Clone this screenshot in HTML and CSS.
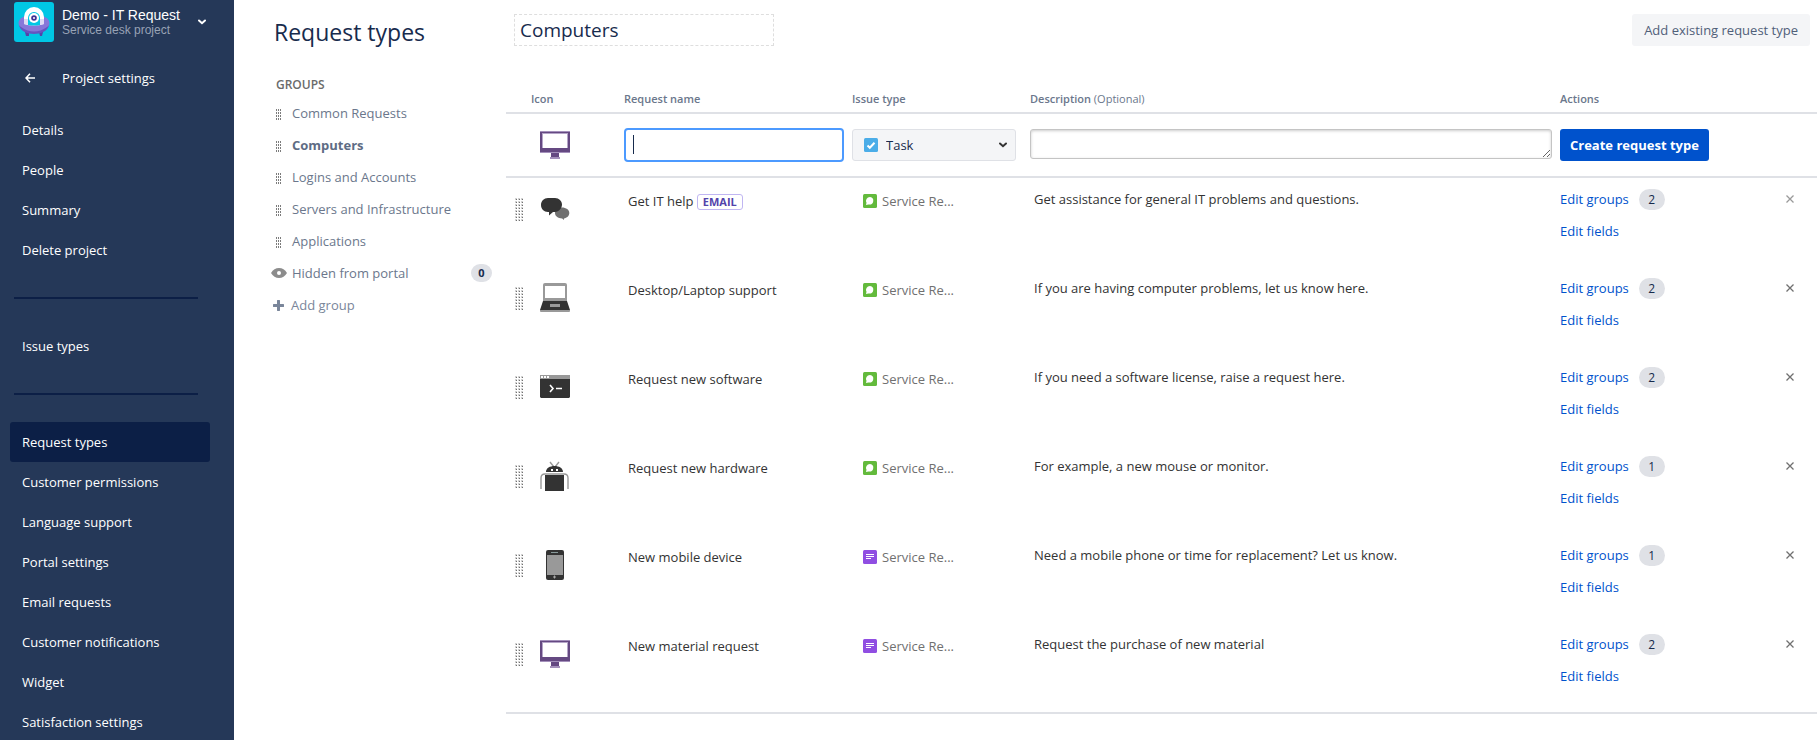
FILE: index.html
```
<!DOCTYPE html>
<html lang="en">
<head>
<meta charset="utf-8">
<title>Request types</title>
<link rel="stylesheet" href="styles.css">
</head>
<body>
<svg class="sprite" aria-hidden="true">
  <defs>
    <pattern id="dots" width="3" height="3" patternUnits="userSpaceOnUse"><rect width="2" height="2" fill="#d2d2d2"/><rect x="1" y="1" width="1" height="1" fill="#707070"/></pattern>
    <symbol id="grip" viewBox="0 0 9 24"><rect width="9" height="24" fill="url(#dots)"/></symbol>
    <symbol id="grip-s" viewBox="0 0 6 12"><path d="M0 0h1v2H0zM2 0h1v2H2zM4 0h1v2H4zM0 3h1v2H0zM2 3h1v2H2zM4 3h1v2H4zM0 6h1v2H0zM2 6h1v2H2zM4 6h1v2H4zM0 9h1v2H0zM2 9h1v2H2zM4 9h1v2H4z" fill="#7c7c7c"/></symbol>
    <symbol id="monitor" viewBox="0 0 30 30"><path d="M0 1h30v22H0z" fill="#a490bb"/><path d="M0 2h30v20H0z" fill="#654982"/><path d="M2 3h26v15H2z" fill="#b5a5c8"/><path d="M3 4h24v14H3z" fill="#fff"/><path d="M11 23h8v4h-8z" fill="#654982"/><path d="M10 27h10v2H10z" fill="#a490bb"/></symbol>
    <symbol id="chat" viewBox="0 0 30 30"><path d="M22 13.500c4 0 7.300 2.300 7.300 5.500 0 3-2.500 5-5.300 5.400L23.800 26l-1.600-1.600c-4.300 0-7.200-2.300-7.200-5.400s3-5.500 7-5.500z" fill="#707070"/><path d="M8 4h7c4 0 7 3 7 6.500S19 18 15 18h-2l-4 3.500V18H8c-4 0-7-3-7-7s3-7 7-7z" fill="#333"/></symbol>
    <symbol id="laptop" viewBox="0 0 30 30"><path d="M5 0h20q2 0 2 2v16H3V2q0-2 2-2z" fill="#999"/><path d="M5 3h20v12H5z" fill="#fff"/><path d="M3 18h24l3 9H0z" fill="#333"/><path d="M10 21h10v3H10z" fill="#999"/><path d="M0 27h30v1q0 1-1 1H1q-1 0-1-1z" fill="#999"/></symbol>
    <symbol id="terminal" viewBox="0 0 30 30"><path d="M1 3h28l1 1v21l-1 1H1l-1-1V4z" fill="#333"/><path d="M1 3h28l1 1v3H0V4z" fill="#999"/><path d="M1 4h2v2H1zM4 4h2v2H4zM7 4h2v2H7z" fill="#fff"/><path d="M10 13l3 3.500-3 3.500M16 16.500h6" fill="none" stroke="#fff" stroke-width="1.600"/></symbol>
    <symbol id="android" viewBox="0 0 30 30"><path d="M10 1l4 5M19 1l-4 5M1 28V17q0-4 4-4h19q4 0 4 4v11" fill="none" stroke="#999" stroke-width="1.400"/><path d="M6 11c0-4 4-6 8.500-6S23 7 23 11zM5 14h19v16H5z" fill="#333"/><path d="M11 8h2v2h-2zM16 8h2v2h-2z" fill="#fff"/></symbol>
    <symbol id="mobile" viewBox="0 0 30 30"><rect x="6" width="18" height="30" rx="2" fill="#333"/><path d="M7 5h16v20H7z" fill="#999"/><path d="M11 2h7v1h-7z" fill="#899"/><path d="M13 27h3M14.500 25.500v3" stroke="#aaa"/></symbol>
    <symbol id="request" viewBox="0 0 14 14"><rect width="14" height="14" rx="1.500" fill="#63ba3c"/><path d="M7 3a4 3.800 0 1 1-1.500 7.500L3 11l.5-2.300A4 3.800 0 0 1 7 3z" fill="#fff"/></symbol>
    <symbol id="purple" viewBox="0 0 14 14"><rect width="14" height="14" rx="1.500" fill="#904ee2"/><path d="M3 4.500h8M3 6.500h8M3 8.500h5" stroke="#fff"/></symbol>
    <symbol id="cross" viewBox="0 0 8 8"><path d="M.5.500l7 7M7.500.500l-7 7" stroke="#707070" stroke-width="1.300"/></symbol>
    <symbol id="chevron" viewBox="0 0 8 6"><path d="M1 1.500l3 2.700 3-2.700" fill="none" stroke="currentColor" stroke-width="2" stroke-linecap="round"/></symbol>
  </defs>
</svg>
<div class="app">
  <nav class="sidebar">
    <button class="project" type="button">
      <svg class="avatar" viewBox="0 0 40 40" aria-hidden="true"><rect width="40" height="40" rx="3" fill="#00c7e5"/><path d="M11 30h4v4h-3zM25 30h4l-1 4h-2z" fill="#5243aa"/><ellipse cx="20" cy="21" rx="15.500" ry="8.500" fill="#8777d9"/><path d="M5 23q15 9 30 0c-2 12-28 12-30 0z" fill="#6554c0"/><path d="M5 21q15 12 30 0c0 2 0 3-2 4q-13 9-26 0c-2-1-2-2-2-4z" fill="#8777d9"/><path d="M10 22v-7a10 10 0 0 1 20 0v7q-10 3-20 0z" fill="#fff"/><path d="M10 17h4v6l-4-1zM26 17h4v5l-4 1z" fill="#dfdaf5"/><path d="M14 23v-7a6 6 0 0 1 12 0v7q-6 1-12 0z" fill="#00c7e5"/><circle cx="20" cy="16" r="5" fill="#fff"/><circle cx="20" cy="16" r="2.800" fill="#403294"/><circle cx="20" cy="16" r="1" fill="#fff"/></svg>
      <span class="project-text"><span class="project-name">Demo - IT Request</span><span class="project-kind">Service desk project</span></span>
      <svg class="chev" aria-hidden="true"><use href="#chevron"/></svg>
    </button>
    <a class="back" href="#"><svg width="10" height="10" viewBox="0 0 10 10" aria-hidden="true"><path d="M5 .800L1 5l4 4.200M1 5h9" fill="none" stroke="#fff" stroke-width="1.500"/></svg><span>Project settings</span></a>
    <a class="item" href="#">Details</a>
    <a class="item" href="#">People</a>
    <a class="item" href="#">Summary</a>
    <a class="item" href="#">Delete project</a>
    <hr class="rule">
    <a class="item" href="#">Issue types</a>
    <hr class="rule">
    <a class="item active" href="#">Request types</a>
    <a class="item" href="#">Customer permissions</a>
    <a class="item" href="#">Language support</a>
    <a class="item" href="#">Portal settings</a>
    <a class="item" href="#">Email requests</a>
    <a class="item" href="#">Customer notifications</a>
    <a class="item" href="#">Widget</a>
    <a class="item" href="#">Satisfaction settings</a>
  </nav>
  <aside class="groups">
    <h1>Request types</h1>
    <h2>GROUPS</h2>
    <a class="group" href="#"><svg class="gs" aria-hidden="true"><use href="#grip-s"/></svg>Common Requests</a>
    <a class="group current" href="#"><svg class="gs" aria-hidden="true"><use href="#grip-s"/></svg>Computers</a>
    <a class="group" href="#"><svg class="gs" aria-hidden="true"><use href="#grip-s"/></svg>Logins and Accounts</a>
    <a class="group" href="#"><svg class="gs" aria-hidden="true"><use href="#grip-s"/></svg>Servers and Infrastructure</a>
    <a class="group" href="#"><svg class="gs" aria-hidden="true"><use href="#grip-s"/></svg>Applications</a>
    <a class="group wide" href="#"><svg width="16" height="10" viewBox="0 0 16 10" aria-hidden="true"><path d="M0 5q3-5 8-5t8 5q-3 5-8 5T0 5z" fill="#8c8c8c"/><circle cx="8" cy="5" r="2" fill="#fff"/></svg>Hidden from portal<span class="count small">0</span></a>
    <button class="group add" type="button"><svg width="11" height="11" viewBox="0 0 11 11" aria-hidden="true"><path d="M5.500 1v9M1 5.500h9" stroke="#7a869a" stroke-width="3" stroke-linecap="round"/></svg>Add group</button>
  </aside>
  <main class="content">
    <header class="top">
      <input class="title" type="text" value="Computers" aria-label="Group name">
      <button class="existing" type="button">Add existing request type</button>
    </header>
    <table>
      <colgroup><col class="c-grip"><col class="c-icon"><col class="c-name"><col class="c-type"><col><col class="c-act"><col class="c-del"></colgroup>
      <thead>
        <tr><th></th><th>Icon</th><th>Request name</th><th>Issue type</th><th>Description <span>(Optional)</span></th><th>Actions</th><th></th></tr>
      </thead>
      <tbody>
        <tr class="create"><td></td><td><svg class="icon" aria-hidden="true"><use href="#monitor"/></svg></td>
          <td><input class="name-field" type="text" aria-label="Request name" autofocus></td>
          <td><div class="select"><svg class="task" viewBox="0 0 14 14" aria-hidden="true"><rect width="14" height="14" rx="1.500" fill="#4bade8"/><path d="M3.500 7.500l2.300 2.300 4.700-5" fill="none" stroke="#fff" stroke-width="2"/></svg><select aria-label="Issue type"><option>Task</option><option>Service Request</option></select><svg class="chev" aria-hidden="true"><use href="#chevron"/></svg></div></td>
          <td><textarea rows="1" aria-label="Description"></textarea></td>
          <td colspan="2"><button class="primary" type="button">Create request type</button></td></tr>
        <tr><td><svg class="grip" aria-hidden="true"><use href="#grip"/></svg></td><td><svg class="icon" aria-hidden="true"><use href="#chat"/></svg></td><td class="name">Get IT help <span class="tag">EMAIL</span></td><td class="type"><svg aria-hidden="true"><use href="#request"/></svg>Service Re...</td><td class="desc">Get assistance for general IT problems and questions.</td><td class="act"><a href="#">Edit groups</a><span class="count">2</span><br><a href="#">Edit fields</a></td><td class="del"><button class="remove faded" type="button" aria-label="Remove"><svg aria-hidden="true"><use href="#cross"/></svg></button></td></tr>
        <tr><td><svg class="grip" aria-hidden="true"><use href="#grip"/></svg></td><td><svg class="icon" aria-hidden="true"><use href="#laptop"/></svg></td><td class="name">Desktop/Laptop support</td><td class="type"><svg aria-hidden="true"><use href="#request"/></svg>Service Re...</td><td class="desc">If you are having computer problems, let us know here.</td><td class="act"><a href="#">Edit groups</a><span class="count">2</span><br><a href="#">Edit fields</a></td><td class="del"><button class="remove" type="button" aria-label="Remove"><svg aria-hidden="true"><use href="#cross"/></svg></button></td></tr>
        <tr><td><svg class="grip" aria-hidden="true"><use href="#grip"/></svg></td><td><svg class="icon" aria-hidden="true"><use href="#terminal"/></svg></td><td class="name">Request new software</td><td class="type"><svg aria-hidden="true"><use href="#request"/></svg>Service Re...</td><td class="desc">If you need a software license, raise a request here.</td><td class="act"><a href="#">Edit groups</a><span class="count">2</span><br><a href="#">Edit fields</a></td><td class="del"><button class="remove" type="button" aria-label="Remove"><svg aria-hidden="true"><use href="#cross"/></svg></button></td></tr>
        <tr><td><svg class="grip" aria-hidden="true"><use href="#grip"/></svg></td><td><svg class="icon" aria-hidden="true"><use href="#android"/></svg></td><td class="name">Request new hardware</td><td class="type"><svg aria-hidden="true"><use href="#request"/></svg>Service Re...</td><td class="desc">For example, a new mouse or monitor.</td><td class="act"><a href="#">Edit groups</a><span class="count">1</span><br><a href="#">Edit fields</a></td><td class="del"><button class="remove" type="button" aria-label="Remove"><svg aria-hidden="true"><use href="#cross"/></svg></button></td></tr>
        <tr><td><svg class="grip" aria-hidden="true"><use href="#grip"/></svg></td><td><svg class="icon" aria-hidden="true"><use href="#mobile"/></svg></td><td class="name">New mobile device</td><td class="type"><svg aria-hidden="true"><use href="#purple"/></svg>Service Re...</td><td class="desc">Need a mobile phone or time for replacement? Let us know.</td><td class="act"><a href="#">Edit groups</a><span class="count">1</span><br><a href="#">Edit fields</a></td><td class="del"><button class="remove" type="button" aria-label="Remove"><svg aria-hidden="true"><use href="#cross"/></svg></button></td></tr>
        <tr><td><svg class="grip" aria-hidden="true"><use href="#grip"/></svg></td><td><svg class="icon" aria-hidden="true"><use href="#monitor"/></svg></td><td class="name">New material request</td><td class="type"><svg aria-hidden="true"><use href="#purple"/></svg>Service Re...</td><td class="desc">Request the purchase of new material</td><td class="act"><a href="#">Edit groups</a><span class="count">2</span><br><a href="#">Edit fields</a></td><td class="del"><button class="remove" type="button" aria-label="Remove"><svg aria-hidden="true"><use href="#cross"/></svg></button></td></tr>
      </tbody>
    </table>
  </main>
</div>
</body>
</html>
```
FILE: styles.css
```
* { box-sizing: border-box; }
body { margin: 0; background: #fff; color: #333; font: 13px/20px "Open Sans", "Noto Sans", sans-serif; }
a { color: #0052cc; text-decoration: none; }
button, input, select, textarea { font: inherit; color: inherit; margin: 0; }
button { border: 0; background: none; cursor: pointer; padding: 0; text-align: left; }
.sprite { position: absolute; width: 0; height: 0; }
.app { display: flex; min-height: 100vh; }
.chev { width: 8px; height: 6px; }

.sidebar { flex: 0 0 234px; background: #253858; color: #fff; padding: 2px 24px 0 10px; display: flex; flex-direction: column; }
.project { display: flex; align-items: center; height: 40px; margin: 0 0 16px 4px; font-family: "Liberation Sans", Arial, sans-serif; }
.avatar { width: 40px; height: 40px; flex: none; }
.project-text { width: 144px; padding: 2px 0 0 8px; display: flex; flex-direction: column; line-height: 15px; white-space: nowrap; }
.project-name { font-size: 14px; }
.project-kind { font-size: 12px; color: #98a2b5; }
.back { display: flex; align-items: center; gap: 27px; height: 40px; margin-bottom: 12px; padding-left: 15px; color: #fff; font-weight: 500; }
.item { height: 40px; line-height: 40px; padding: 0 12px; border-radius: 3px; color: #fff; font-weight: 500; }
.item.active { background: #0c1f46; }
.rule { border: 0; height: 2px; background: #0c1f46; margin: 27px 12px 27px 4px; }

.groups { flex: 0 0 272px; padding: 16px 14px 0 37px; display: flex; flex-direction: column; }
h1 { margin: 0 0 27px 3px; font-size: 23px; line-height: 32px; font-weight: 500; color: #172b4d; }
h2 { margin: 0 0 2px 5px; font-size: 12px; line-height: 20px; font-weight: 600; color: #6b6b6b; }
.group { display: flex; align-items: center; height: 32px; color: #6b778c; padding-left: 5px; white-space: nowrap; }
.group.current { color: #5e6c84; font-weight: 700; }
.gs { width: 6px; height: 12px; margin: 3px 10px 0 0; }
.group.wide { padding-left: 0; gap: 5px; }
.group.add { padding-left: 2px; gap: 7px; color: #7a869a; }
.count { display: inline-block; width: 26px; height: 21px; margin-left: 10px; border-radius: 11px; background: #dfe1e6; color: #172b4d; text-align: center; font-size: 12px; line-height: 21px; font-weight: 500; }
.count.small { width: 21px; height: 18px; margin-left: auto; font-size: 11px; line-height: 18px; font-weight: 700; }

.content { flex: 1; min-width: 0; }
.top { display: flex; justify-content: space-between; padding: 14px 7px 0 8px; margin-bottom: 36px; }
.title { width: 260px; height: 32px; padding: 0 5px; border: 1px dashed #dedede; background: none; font-size: 19px; font-weight: 500; color: #172b4d; }
.existing { height: 32px; padding: 0 12px; border-radius: 3px; background: #f4f5f7; color: #505f79; }
table { width: 100%; table-layout: fixed; border-collapse: separate; border-spacing: 0; border-bottom: 2px solid #dfe1e6; }
.c-grip { width: 21px; }
.c-icon { width: 93px; }
.c-name { width: 228px; }
.c-type { width: 178px; }
.c-act { width: 190px; }
.c-del { width: 71px; }
th { height: 32px; padding: 7px 4px 3px; border-bottom: 2px solid #dfe1e6; text-align: left; font-size: 11px; line-height: 20px; font-weight: 600; color: #6b778c; white-space: nowrap; }
th span { font-weight: 400; }
td { height: 89px; padding: 0 4px; vertical-align: top; }
.create td { height: 64px; padding-top: 15px; border-bottom: 2px solid #dfe1e6; }
.icon { display: block; width: 30px; height: 30px; margin: 16px 0 0 9px; }
.create .icon { margin-top: 1px; }
.grip { display: block; width: 9px; height: 24px; margin: 20px 0 0 5px; }
.name-field { display: block; width: 100%; height: 34px; margin-top: -1px; padding: 0 7px; border: 2px solid #4c9aff; border-radius: 4px; outline: 0; background: #fff; font-size: 14px; color: #172b4d; }
.name-field:placeholder-shown, .name-field:focus { caret-color: transparent; background: linear-gradient(#172b4d, #172b4d) 7px 5px / 1px 19px no-repeat; }
.select { position: relative; width: 164px; }
.select select { display: block; width: 100%; height: 32px; padding: 0 24px 0 33px; border: 1px solid #dfe1e6; border-radius: 3px; appearance: none; background: #f4f5f7; color: #172b4d; }
.select .task { position: absolute; left: 12px; top: 9px; width: 14px; height: 14px; }
.select .chev { position: absolute; right: 9px; top: 13px; color: #333; pointer-events: none; }
textarea { display: block; width: 100%; height: 30px; padding: 4px; border: 1px solid #c4c4c4; border-radius: 3px; box-shadow: inset 0 1px 3px #ccc; resize: vertical; }
.primary { height: 32px; padding: 0 10px; border-radius: 3px; background: #0052cc; color: #fff; font-weight: 700; white-space: nowrap; }
.name, .type, .desc { white-space: nowrap; }
.name { padding: 13px 8px; }
.tag { display: inline-block; padding: 0 5px; border: 1px solid #c0b6f2; border-radius: 3px; font-size: 11px; line-height: 14px; font-weight: 700; color: #5243aa; }
.type { padding: 13px 15px; color: #707070; }
.type svg { width: 14px; height: 14px; margin-right: 5px; vertical-align: -2px; }
.desc { padding: 11px 8px; }
.act { padding-top: 5px; line-height: 32px; }
.del { padding: 11px 0; }
.remove { display: block; margin-left: 38px; padding: 6px 2px; }
.remove svg { display: block; width: 8px; height: 8px; }
.faded { opacity: .7; }
```
